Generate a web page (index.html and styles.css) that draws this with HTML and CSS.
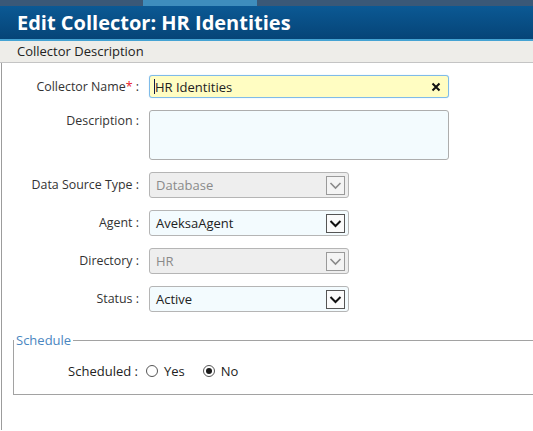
FILE: index.html
```html
<!DOCTYPE html>
<html lang="en">
<head>
<meta charset="utf-8">
<title>Edit Collector: HR Identities</title>
<link rel="stylesheet" href="styles.css">
</head>
<body>
<div class="topstrip"><div class="tab"></div></div>
<div class="header"><h1 class="title">Edit Collector: HR Identities</h1></div>
<div class="subheader">Collector Description</div>
<div class="content">
  <div class="form">
    <div class="row">
      <div class="label">Collector Name<span class="req">*</span> :</div>
      <div class="field text-input focused">
        <span class="caret"></span><span class="value">HR Identities</span>
        <svg class="clear" width="10" height="10" viewBox="0 0 10 10"><path d="M1.5 1.5 L8.5 8.5 M8.5 1.5 L1.5 8.5" stroke="#111" stroke-width="2" fill="none"/></svg>
      </div>
    </div>
    <div class="row top">
      <div class="label">Description :</div>
      <div class="field textarea"></div>
    </div>
    <div class="row">
      <div class="label">Data Source Type :</div>
      <div class="field select disabled">
        <span class="value">Database</span>
        <span class="arrow"><svg width="13" height="9" viewBox="0 0 13 9"><path d="M1.5 2 L6.5 7 L11.5 2" stroke="#8a8a8a" stroke-width="1.6" fill="none"/></svg></span>
      </div>
    </div>
    <div class="row">
      <div class="label">Agent :</div>
      <div class="field select">
        <span class="value">AveksaAgent</span>
        <span class="arrow"><svg width="13" height="9" viewBox="0 0 13 9"><path d="M1.5 2 L6.5 7 L11.5 2" stroke="#111" stroke-width="2" fill="none"/></svg></span>
      </div>
    </div>
    <div class="row">
      <div class="label">Directory :</div>
      <div class="field select disabled">
        <span class="value">HR</span>
        <span class="arrow"><svg width="13" height="9" viewBox="0 0 13 9"><path d="M1.5 2 L6.5 7 L11.5 2" stroke="#8a8a8a" stroke-width="1.6" fill="none"/></svg></span>
      </div>
    </div>
    <div class="row">
      <div class="label">Status :</div>
      <div class="field select">
        <span class="value">Active</span>
        <span class="arrow"><svg width="13" height="9" viewBox="0 0 13 9"><path d="M1.5 2 L6.5 7 L11.5 2" stroke="#111" stroke-width="2" fill="none"/></svg></span>
      </div>
    </div>
  </div>
  <fieldset class="schedule">
    <legend class="legend">Schedule</legend>
    <div class="sched-row">
      <div class="sched-label">Scheduled :</div>
      <span class="radio"></span><span class="radio-text">Yes</span>
      <span class="radio checked"></span><span class="radio-text">No</span>
    </div>
  </fieldset>
</div>
</body>
</html>
```
FILE: styles.css
```css
html, body {
  margin: 0;
  padding: 0;
  background: #ffffff;
}
body {
  width: 533px;
  height: 431px;
  overflow: hidden;
  font-family: "Open Sans", "Liberation Sans", sans-serif;
  font-size: 13px;
  color: #333333;
}
.topstrip {
  height: 6px;
  background: #3a5877;
  position: relative;
}
.tab {
  position: absolute;
  left: 143px;
  top: 0;
  width: 114px;
  height: 6px;
  background: #3e8dbd;
}
.header {
  height: 33px;
  background: linear-gradient(#0b5994, #064477);
  border-bottom: 2px solid #45a3d3;
  display: flex;
  align-items: center;
  padding-left: 17px;
}
.title {
  margin: 0;
  font-size: 20px;
  font-weight: 700;
  color: #ffffff;
  line-height: 1;
}
.subheader {
  height: 21px;
  background: #eeede9;
  border-bottom: 1px solid #c4c4c4;
  padding-left: 17px;
  line-height: 21px;
  color: #222222;
}
.content {
  margin-left: 1px;
  border-left: 1px solid #9c9c9c;
  height: 367px;
}
.form {
  padding-top: 12px;
  display: flex;
  flex-direction: column;
  gap: 12px;
}
.row {
  display: flex;
  align-items: center;
}
.row.top {
  align-items: flex-start;
}
.row.top .label {
  padding-top: 2px;
}
.label {
  width: 137px;
  margin-right: 10px;
  text-align: right;
  white-space: nowrap;
  line-height: 18px;
  font-size: 12.4px;
}
.req {
  color: #e8202a;
}
.field {
  box-sizing: border-box;
  border-radius: 3px;
  display: flex;
  align-items: center;
  position: relative;
}
.text-input {
  width: 300px;
  height: 23px;
  background: #fffdc2;
  border: 1px solid #7fbbe9;
  box-shadow: 0 0 1px #9fd0f5;
  padding-left: 4px;
  color: #222222;
}
.caret {
  display: inline-block;
  width: 1px;
  height: 15px;
  background: #111a4a;
}
.clear {
  position: absolute;
  right: 7px;
  top: 6px;
}
.textarea {
  width: 300px;
  height: 50px;
  background: #f3fbfe;
  border: 1px solid #adadad;
}
.select {
  width: 200px;
  height: 26px;
  background: #f3fbfe;
  border: 1px solid #b5b5b5;
  padding-left: 6px;
  color: #222222;
  justify-content: space-between;
}
.select.disabled {
  background: #eeeeee;
  color: #8a8a8a;
}
.arrow {
  box-sizing: border-box;
  width: 19px;
  height: 19px;
  margin-right: 3px;
  border: 1px solid #555555;
  background: #fbfbfb;
  display: flex;
  align-items: center;
  justify-content: center;
}
.select.disabled .arrow {
  border-color: #9a9a9a;
  background: #f4f4f4;
}
.schedule {
  margin: 19px 0 0 11px;
  padding: 12px 0 13px 0;
  border: 1px solid #a2a2a2;
  border-right: 0;
  min-width: 0;
}
.legend {
  padding: 0 2px;
  margin-left: 0;
  color: #4a86bf;
  line-height: 18px;
  font-size: 13px;
}
.sched-row {
  display: flex;
  align-items: center;
  height: 20px;
}
.sched-label {
  width: 124px;
  text-align: right;
  margin-right: 8px;
  color: #222222;
}
.radio {
  box-sizing: border-box;
  width: 12px;
  height: 12px;
  border: 1px solid #555555;
  border-radius: 50%;
  background: #ffffff;
  display: inline-flex;
  align-items: center;
  justify-content: center;
}
.radio.checked::after {
  content: "";
  width: 6px;
  height: 6px;
  border-radius: 50%;
  background: #1a1a1a;
}
.radio-text {
  margin-left: 6px;
  margin-right: 18px;
  color: #222222;
}
```
